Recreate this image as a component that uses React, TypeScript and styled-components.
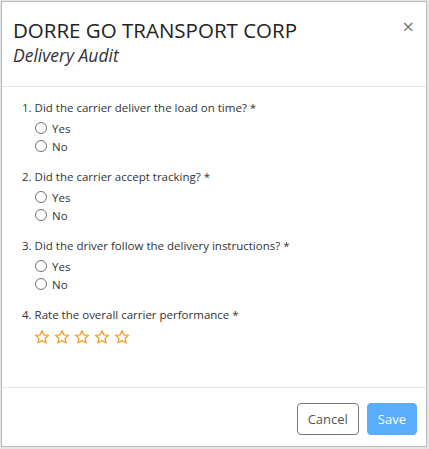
import React from "react";
import styled, { createGlobalStyle } from "styled-components";

const Global = createGlobalStyle`
  html, body { margin: 0; padding: 0; background: #fff; }
  body { font-family: "Open Sans", "Noto Sans", sans-serif; color: #333; }
  * { box-sizing: border-box; }
`;

const Frame = styled.div`
  width: 429px;
  height: 449px;
  padding: 1px 2px 2px 1px;
  background: #e4e4e4;
`;

const Modal = styled.div`
  width: 100%;
  height: 100%;
  background: #fff;
  border: 1px solid #bdbdbd;
  display: flex;
  flex-direction: column;
`;

const Header = styled.div`
  position: relative;
  padding: 14px 12px 0 11px;
  height: 85px;
  flex: none;
  border-bottom: 1px solid #e5e5e5;
`;

const Title = styled.h1`
  margin: 0;
  font-size: 20.5px;
  font-weight: 400;
  line-height: 28px;
  color: #222;
`;

const Subtitle = styled.div`
  font-size: 17.5px;
  font-style: italic;
  line-height: 22px;
  color: #333;
`;

const Close = styled.button`
  position: absolute;
  top: 15px;
  right: 12px;
  border: 0;
  background: none;
  padding: 0;
  font-size: 20px;
  line-height: 20px;
  color: #777;
  cursor: pointer;
  font-family: "Open Sans", sans-serif;
`;

const Body = styled.div`
  flex: 1;
  padding: 12px 20px 0 20px;
  border-bottom: 1px solid #e5e5e5;
`;

const Question = styled.div`
  margin-bottom: 13px;
`;

const QText = styled.div`
  font-size: 11.5px;
  line-height: 18px;
  color: #333;
`;

const Options = styled.div`
  margin-top: 2px;
`;

const Option = styled.label`
  display: flex;
  align-items: center;
  gap: 5px;
  height: 18px;
  padding-left: 13px;
  font-size: 11.5px;
  color: #333;
`;

const Circle = styled.span`
  width: 12px;
  height: 12px;
  border: 1px solid #707070;
  border-radius: 50%;
  display: inline-block;
`;

const Stars = styled.div`
  display: flex;
  gap: 4px;
  padding-left: 12px;
  margin-top: 5px;
`;

const Footer = styled.div`
  height: 58px;
  flex: none;
  display: flex;
  justify-content: flex-end;
  align-items: flex-start;
  gap: 8px;
  padding: 15px 9px 0 0;
`;

const Btn = styled.button<{ $primary?: boolean }>`
  height: 32px;
  min-width: 50px;
  padding: 0 10px;
  font-size: 13px;
  font-family: "Open Sans", sans-serif;
  border-radius: 4px;
  border: 1px solid ${(p) => (p.$primary ? "#5aacff" : "#777")};
  background: ${(p) => (p.$primary ? "#5aacff" : "#fff")};
  color: ${(p) => (p.$primary ? "#fff" : "#555")};
`;

const Star = () => (
  <svg width="16" height="16" viewBox="0 0 24 24" fill="none" stroke="#f0a030" strokeWidth="2" strokeLinejoin="round">
    <polygon points="12,2.5 14.9,8.8 21.8,9.5 16.6,14.1 18.1,21 12,17.5 5.9,21 7.4,14.1 2.2,9.5 9.1,8.8" />
  </svg>
);

const questions = [
  "1. Did the carrier deliver the load on time? *",
  "2. Did the carrier accept tracking? *",
  "3. Did the driver follow the delivery instructions? *",
];

export default function App() {
  return (
    <>
      <Global />
      <Frame>
        <Modal>
          <Header>
            <Title>DORRE GO TRANSPORT CORP</Title>
            <Subtitle>Delivery Audit</Subtitle>
            <Close>×</Close>
          </Header>
          <Body>
            {questions.map((q) => (
              <Question key={q}>
                <QText>{q}</QText>
                <Options>
                  <Option><Circle />Yes</Option>
                  <Option><Circle />No</Option>
                </Options>
              </Question>
            ))}
            <Question>
              <QText>4. Rate the overall carrier performance *</QText>
              <Stars>
                {[0, 1, 2, 3, 4].map((i) => <Star key={i} />)}
              </Stars>
            </Question>
          </Body>
          <Footer>
            <Btn>Cancel</Btn>
            <Btn $primary>Save</Btn>
          </Footer>
        </Modal>
      </Frame>
    </>
  );
}
